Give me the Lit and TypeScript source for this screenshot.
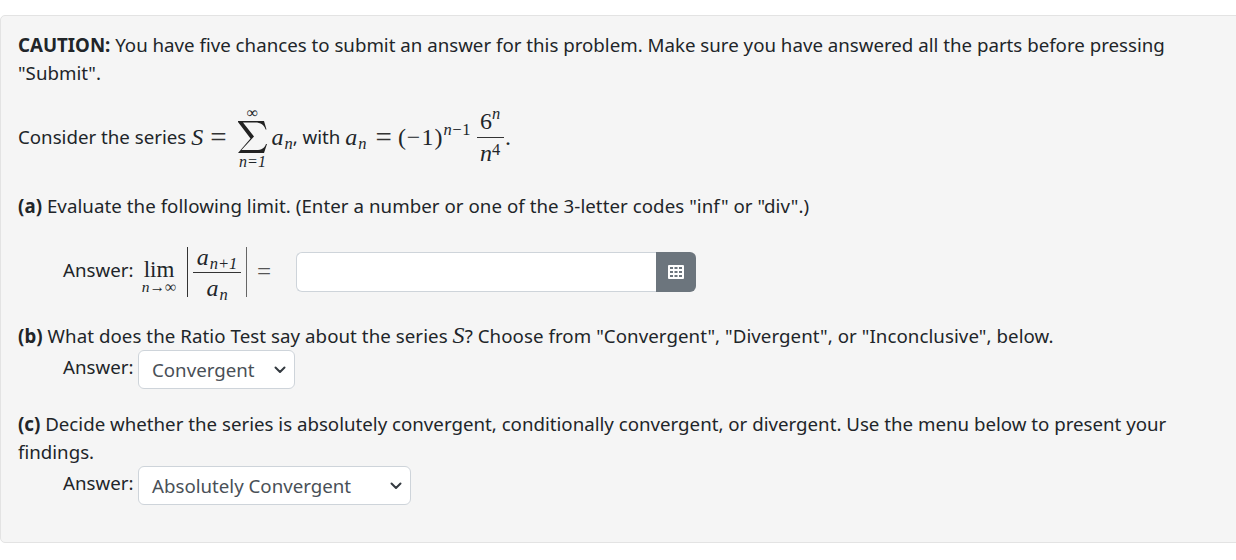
import { LitElement, html, css } from "lit";
import { customElement } from "lit/decorators.js";

@customElement("app-root")
export class AppRoot extends LitElement {
  static styles = css`
    :host { display: block; width: 1236px; height: 560px; overflow: hidden; background: #fff; font-family: "Noto Sans", "Open Sans", sans-serif; font-size: 18.69px; line-height: 28px; color: #212529; }
    .card { box-sizing: border-box; width: 1244px; height: 528px; margin-top: 15px; background: #f5f5f5; border: 1px solid #e3e3e3; border-radius: 5px; padding: 15px 17px; }
    p { margin: 0; width: 1170px; }
    b { font-weight: 700; }
    .m { font-family: "Liberation Serif", serif; font-size: 24px; line-height: 1; }
    .i { font-style: italic; }
    .op { font-size: 29px; margin: 0 6px 0 9px; color: #333; }
    .op1 { margin: 0 10px 0 7px; }
    .series { display: flex; align-items: center; height: 70px; margin-top: 15px; white-space: pre; }
    .sum { display: inline-flex; flex-direction: column; align-items: center; width: 32px; margin: 0 3px 0 0; line-height: 1; }
    .lim-s { font-family: "Liberation Serif", serif; font-size: 16px; line-height: 15px; }
    .sum svg { display: block; margin: 1px 0 1px; }
    .sub { font-size: 16.5px; font-style: italic; position: relative; top: 4px; line-height: 1; margin-left: 1px; }
    .sup { font-size: 16.5px; position: relative; top: -10px; line-height: 1; letter-spacing: 0.6px; }
    .bot .sup { top: -6px; }
    .paren { letter-spacing: 1px; }
    .frac { display: inline-flex; flex-direction: column; align-items: center; margin: 0 1px 0 6px; line-height: 1; width: 27px; letter-spacing: 0; }
    .frac .top { align-self: stretch; text-align: center; border-bottom: 1px solid #333; line-height: 31px; white-space: pre; }
    .frac .bot { line-height: 31px; white-space: pre; }
    .q { margin-top: 20px; letter-spacing: 0.05px; }
    .ans { display: flex; align-items: center; margin-left: 45px; }
    .ans1 { height: 50px; margin-top: 27px; }
    .lab { position: relative; top: -2px; width: 75px; flex: none; }
    .row .lab { top: -3px; }
    .lim { display: inline-flex; flex-direction: column; align-items: center; width: 42px; line-height: 1; font-family: "Liberation Serif", serif; }
    .lim .word { font-size: 23px; line-height: 20px; margin-top: 10px; }
    .lim .under { font-size: 15.5px; line-height: 14px; font-style: italic; white-space: pre; }
    .absv { display: flex; align-items: center; margin-left: 7px; height: 50px; border-left: 1.5px solid #333; border-right: 1.5px solid #666; padding: 0 5px; font-family: "Liberation Serif", serif; font-size: 24px; }
    .absv .frac { margin: 0; width: 48px; }
    .absv .top { line-height: 30px; }
    .absv .bot { line-height: 30px; }
    .eq { margin: 0 25px 0 10px; font-family: "Liberation Serif", serif; font-size: 25px; color: #555; }
    .group { display: flex; width: 400px; height: 40px; box-sizing: border-box; }
    .input { flex: 1; background: #fff; border: 1px solid #ced4da; border-right: 0; border-radius: 6px 0 0 6px; }
    .btn { width: 40px; background: #6c757d; border-radius: 0 6px 6px 0; display: flex; align-items: center; justify-content: center; }
    .sel { display: flex; align-items: center; justify-content: space-between; box-sizing: border-box; height: 39px; background: #fff; border: 1px solid #ced4da; border-radius: 6px; padding: 0 8px 0 13px; color: #495057; }
    .s1 { width: 157px; }
    .s2 { width: 273px; }
    .b1 { margin-top: 25px; letter-spacing: 0.06px; }
    .c1 { margin-top: 21px; }
  `;

  private chevron() {
    return html`<svg width="12" height="8" viewBox="0 0 12 8"><path d="M1.5 1.5 6 6l4.5-4.5" fill="none" stroke="#343a40" stroke-width="2" stroke-linecap="round" stroke-linejoin="round"/></svg>`;
  }

  render() {
    return html`<div class="card">
      <p><b>CAUTION:</b> You have five chances to submit an answer for this problem. Make sure you have answered all the parts before pressing "Submit".</p>
      <div class="series">Consider the series <span class="m i">S</span><span class="m op op1">=</span><span class="sum"><span class="lim-s">∞</span><svg width="30" height="32" viewBox="0 0 30 32"><path d="M1 0H27L29.5 8.5H28.6C27 3.5 24 1.4 18 1.4H6L17 15.5 4.5 29H19C25 29 27.4 27 29 23H30L27 32H1L13.5 17.5 1 1Z" fill="#222"/></svg><span class="lim-s i">n=1</span></span><span class="m i">a<span class="sub">n</span></span><span>, with </span><span class="m"><span class="i">a</span><span class="sub">n</span></span><span class="m op">=</span><span class="m paren">(−1)<span class="sup"><span class="i">n</span>−1</span></span><span class="m frac"><span class="top">6<span class="sup i">n</span></span><span class="bot"><span class="i">n</span><span class="sup">4</span></span></span><span class="m">.</span></div>
      <p class="q"><b>(a)</b> Evaluate the following limit. (Enter a number or one of the 3-letter codes "inf" or "div".)</p>
      <div class="ans ans1">
        <span class="lab">Answer:</span>
        <span class="lim"><span class="word">lim</span><span class="under">n→∞</span></span>
        <span class="absv"><span class="frac"><span class="top"><span class="i">a</span><span class="sub">n+1</span></span><span class="bot"><span class="i">a</span><span class="sub">n</span></span></span></span>
        <span class="eq">=</span>
        <div class="group"><div class="input"></div><div class="btn">
          <svg width="16" height="14" viewBox="0 0 16 14"><rect width="16" height="14" rx="1" fill="#fff"/><g fill="#6c757d"><rect x="2" y="2" width="3" height="2"/><rect x="6.5" y="2" width="3" height="2"/><rect x="11" y="2" width="3" height="2"/><rect x="2" y="6" width="3" height="2"/><rect x="6.5" y="6" width="3" height="2"/><rect x="11" y="6" width="3" height="2"/><rect x="2" y="10" width="3" height="2"/><rect x="6.5" y="10" width="3" height="2"/><rect x="11" y="10" width="3" height="2"/></g></svg>
        </div></div>
      </div>
      <p class="b1"><b>(b)</b> What does the Ratio Test say about the series <span class="m i">S</span>? Choose from "Convergent", "Divergent", or "Inconclusive", below.</p>
      <div class="ans row"><span class="lab">Answer:</span><div class="sel s1">Convergent ${this.chevron()}</div></div>
      <p class="c1"><b>(c)</b> Decide whether the series is absolutely convergent, conditionally convergent, or divergent. Use the menu below to present your findings.</p>
      <div class="ans row"><span class="lab">Answer:</span><div class="sel s2">Absolutely Convergent ${this.chevron()}</div></div>
    </div>`;
  }
}
